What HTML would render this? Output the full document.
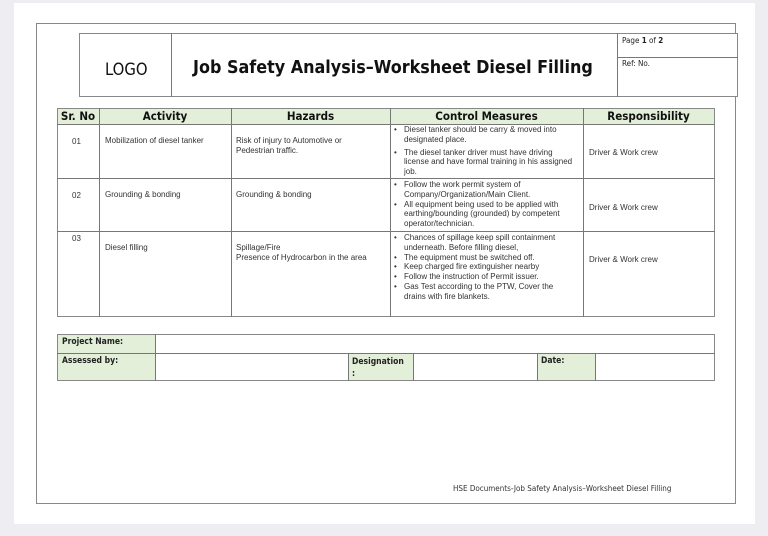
<!DOCTYPE html>
<html><head><meta charset="utf-8"><style>
*{margin:0;padding:0;box-sizing:border-box}
body{width:768px;height:536px;background:#eeeef2;position:relative;overflow:hidden;font-family:"Liberation Sans",Arial,sans-serif;color:#222}
.a{position:absolute}
.sheet{left:14px;top:3px;width:741px;height:521px;background:#fff}
.inner{left:36px;top:23px;width:700px;height:481px;border:1px solid #888}
.l{position:absolute;background:#777}
.h{position:absolute;font-family:"DejaVu Sans Condensed","Liberation Sans",sans-serif;font-weight:bold;font-size:11.5px;text-align:center;color:#111}
.t{position:absolute;font-size:8px;line-height:9.8px;color:#333}
.g{position:absolute;background:#e3efd9}
ul{list-style:none}
li{position:relative;padding-left:11px}
li:before{content:"•";position:absolute;left:1px}
.c{font-family:"DejaVu Sans Condensed","Liberation Sans",sans-serif;font-size:8.5px;font-weight:bold;color:#222}
</style></head><body>
<div class="a sheet"></div>
<div class="a inner"></div>

<div class="a" style="left:79px;top:33px;width:659px;height:64px;border:1px solid #888;background:#fff"></div>
<div class="l" style="left:171px;top:33px;width:1px;height:64px"></div>
<div class="l" style="left:617px;top:33px;width:1px;height:64px"></div>
<div class="l" style="left:617px;top:57px;width:121px;height:1px"></div>
<div class="a" style="left:105px;top:60px;font-family:'DejaVu Sans Condensed','Liberation Sans',sans-serif;font-size:16.5px;color:#111">LOGO</div>
<div class="a" style="left:193px;top:57px;font-family:'DejaVu Sans Condensed','Liberation Sans',sans-serif;font-weight:bold;font-size:17.8px;color:#111;white-space:nowrap">Job Safety Analysis–Worksheet Diesel Filling</div>
<div class="a" style="left:622px;top:36px;font-family:'DejaVu Sans Condensed','Liberation Sans',sans-serif;font-size:8px">Page <b>1</b> of <b>2</b></div>
<div class="a" style="left:622px;top:59px;font-family:'DejaVu Sans Condensed','Liberation Sans',sans-serif;font-size:8px">Ref: No.</div>

<div class="g" style="left:57px;top:108px;width:657px;height:16px"></div>
<div class="a" style="left:57px;top:108px;width:658px;height:209px;border:1px solid #888"></div>
<div class="l" style="left:57px;top:124px;width:658px;height:1px"></div>
<div class="l" style="left:57px;top:178px;width:658px;height:1px"></div>
<div class="l" style="left:57px;top:231px;width:658px;height:1px"></div>
<div class="l" style="left:99px;top:108px;width:1px;height:209px"></div>
<div class="l" style="left:231px;top:108px;width:1px;height:209px"></div>
<div class="l" style="left:390px;top:108px;width:1px;height:209px"></div>
<div class="l" style="left:583px;top:108px;width:1px;height:209px"></div>
<div class="h" style="left:57px;top:109px;width:42px">Sr. No</div>
<div class="h" style="left:99px;top:109px;width:132px">Activity</div>
<div class="h" style="left:231px;top:109px;width:159px">Hazards</div>
<div class="h" style="left:390px;top:109px;width:193px">Control Measures</div>
<div class="h" style="left:583px;top:109px;width:131px">Responsibility</div>

<div class="t" style="left:72px;top:137px">01</div>
<div class="t" style="left:105px;top:136px">Mobilization of diesel tanker</div>
<div class="t" style="left:236px;top:136px">Risk of injury to Automotive or<br>Pedestrian traffic.</div>
<div class="t" style="left:393px;top:125px;width:185px"><ul><li>Diesel tanker should be carry &amp; moved into designated place.</li><li style="margin-top:3px">The diesel tanker driver must have driving license and have formal training in his assigned job.</li></ul></div>
<div class="t" style="left:589px;top:148px">Driver &amp; Work crew</div>

<div class="t" style="left:72px;top:191px">02</div>
<div class="t" style="left:105px;top:190px">Grounding &amp; bonding</div>
<div class="t" style="left:236px;top:190px">Grounding &amp; bonding</div>
<div class="t" style="left:393px;top:180px;width:190px"><ul><li>Follow the work permit system of Company/Organization/Main Client.</li><li>All equipment being used to be applied with earthing/bounding (grounded) by competent operator/technician.</li></ul></div>
<div class="t" style="left:589px;top:203px">Driver &amp; Work crew</div>

<div class="t" style="left:72px;top:234px">03</div>
<div class="t" style="left:105px;top:243px">Diesel filling</div>
<div class="t" style="left:236px;top:243px">Spillage/Fire<br>Presence of Hydrocarbon in the area</div>
<div class="t" style="left:393px;top:233px;width:180px"><ul><li>Chances of spillage keep spill containment underneath. Before filling diesel,</li><li>The equipment must be switched off.</li><li>Keep charged fire extinguisher nearby</li><li>Follow the instruction of Permit issuer.</li><li>Gas Test according to the PTW, Cover the drains with fire blankets.</li></ul></div>
<div class="t" style="left:589px;top:255px">Driver &amp; Work crew</div>

<div class="g" style="left:57px;top:334px;width:98px;height:46px"></div>
<div class="g" style="left:348px;top:353px;width:65px;height:27px"></div>
<div class="g" style="left:537px;top:353px;width:58px;height:27px"></div>
<div class="a" style="left:57px;top:334px;width:658px;height:47px;border:1px solid #888"></div>
<div class="l" style="left:57px;top:353px;width:658px;height:1px"></div>
<div class="l" style="left:155px;top:334px;width:1px;height:47px"></div>
<div class="l" style="left:348px;top:353px;width:1px;height:28px"></div>
<div class="l" style="left:413px;top:353px;width:1px;height:28px"></div>
<div class="l" style="left:537px;top:353px;width:1px;height:28px"></div>
<div class="l" style="left:595px;top:353px;width:1px;height:28px"></div>
<div class="a c" style="left:62px;top:337px">Project Name:</div>
<div class="a c" style="left:62px;top:356px">Assessed by:</div>
<div class="a c" style="left:352px;top:356px;line-height:12px">Designation<br>:</div>
<div class="a c" style="left:541px;top:356px">Date:</div>

<div class="a" style="left:453px;top:484px;font-family:'DejaVu Sans Condensed','Liberation Sans',sans-serif;font-size:8px;color:#333;white-space:nowrap">HSE Documents-Job Safety Analysis–Worksheet Diesel Filling</div>
</body></html>
